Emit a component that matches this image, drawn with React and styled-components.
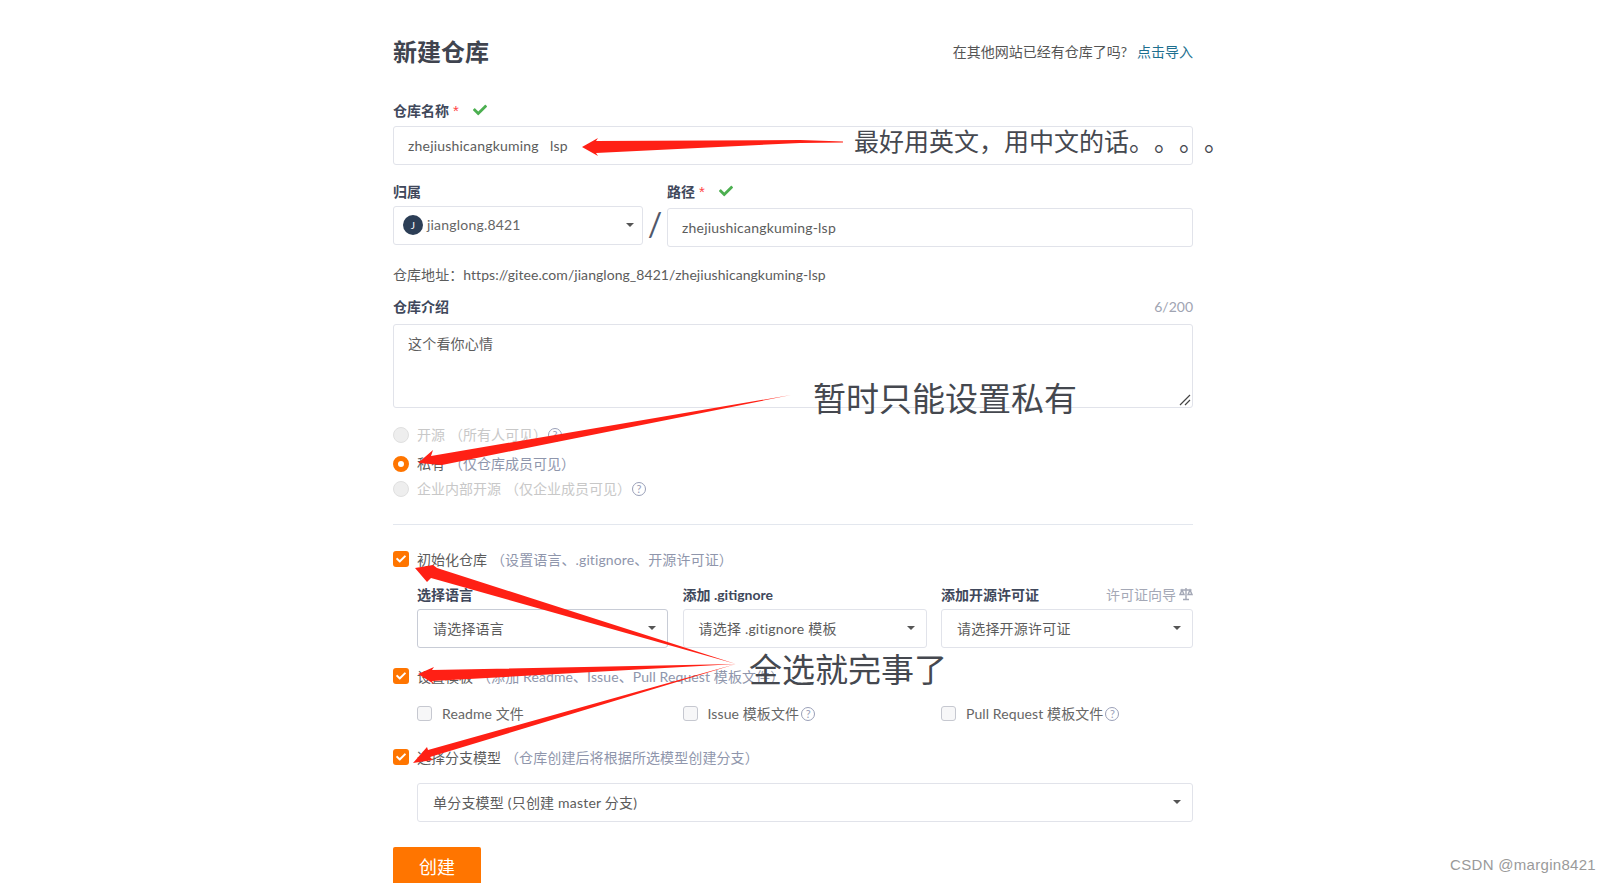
import React from "react";
import styled, { createGlobalStyle } from "styled-components";
import { FaCheck } from "react-icons/fa";

const Global = createGlobalStyle`
  html, body { margin: 0; padding: 0; background: #fff; height: 883px; overflow: hidden; }
  body { font-family: Lato, "Noto Sans CJK SC", sans-serif; font-size: 14px; color: #40485b; letter-spacing: 0.2px; text-spacing-trim: space-all; font-feature-settings: "chws" 0, "palt" 0; }
`;
const Page = styled.div`
  position: relative; width: 1611px; height: 883px; overflow: hidden; background: #fff;
`;
const Form = styled.div`
  width: 800px; margin-left: 393px; padding-top: 37px;
  display: flex; flex-direction: column;
`;
const Head = styled.div`
  display: flex; justify-content: space-between; align-items: center; height: 30px;
`;
const Title = styled.h1`
  margin: 0; font-size: 24px; font-weight: 700; color: #40444f; line-height: 30px; letter-spacing: 0;
`;
const ImportHint = styled.div`
  font-size: 14px; color: #555; padding-bottom: 2px; letter-spacing: 0;
`;
const ImportLink = styled.a` color: #1d6f8f; margin-left: 10px; text-decoration: none; `;
const Label = styled.div`
  display: flex; align-items: center; gap: 4px; height: 20px; letter-spacing: 0; flex: none;
  font-size: 14px; font-weight: 700; color: #40485b; margin-top: ${p => p.$top || 0}px;
`;
const Star = styled.span` color: #f44; font-family: "Liberation Sans", sans-serif; font-size: 15px; font-weight: 400; `;
const Ok = styled(FaCheck)` color: #4caf50; font-size: 14px; margin-left: 10px; `;
const Field = styled.div`
  height: 39px; box-sizing: border-box; border: 1px solid ${p => p.$focus ? "#c8ccd6" : "#e1e3ea"}; border-radius: 3px; flex: none;
  display: flex; align-items: center; justify-content: space-between;
  padding: 0 ${p => p.$pr || 14}px ${p => p.$pb || 0}px ${p => p.$pl || 14}px; margin-top: ${p => p.$top || 0}px;
  color: #5c5c5c; font-size: 14px; background: #fff; white-space: pre;
`;
const OwnerRow = styled.div`
  display: flex; margin-top: 16px;
`;
const Col = styled.div`
  display: flex; flex-direction: column; width: ${p => p.$w ? p.$w + "px" : "auto"}; flex: ${p => p.$flex || "none"};
`;
const Slash = styled.div`
  width: 24px; flex: none; padding-top: 25px;
  font-size: 32px; line-height: 36px; text-align: center; color: #50586a; font-weight: 400;
`;
const Avatar = styled.span`
  width: 20px; height: 20px; border-radius: 50%; background: #2c3e56; color: #fff;
  font-size: 10px; display: inline-flex; align-items: center; justify-content: center; margin-right: 4px;
`;
const OwnerValue = styled.span` display: flex; align-items: center; color: #666; `;
const Caret = styled.span`
  width: 0; height: 0; border: 4px solid transparent; border-top: 4.5px solid #555; border-bottom: 0; flex: none;
`;
const Address = styled.div`
  margin-top: 18px; height: 20px; line-height: 20px; color: #5c5c5c; letter-spacing: 0.05px;
`;
const Between = styled.div`
  display: flex; justify-content: space-between; align-items: center; height: 20px; margin-top: ${p => p.$top || 0}px;
`;
const Count = styled.span` color: #a0a4b2; font-size: 14px; font-weight: 400; letter-spacing: 0; `;
const TextArea = styled.div`
  position: relative; box-sizing: border-box; height: 84px; margin-top: 8px;
  border: 1px solid #e1e3ea; border-radius: 3px; padding: 9px 14px; color: #5c5c5c; line-height: 20px;
`;
const Grip = styled.svg` position: absolute; right: 1px; bottom: 1px; `;
const Radios = styled.div` margin-top: 17px; display: flex; flex-direction: column; `;
const RadioRow = styled.div`
  display: flex; align-items: center; height: ${p => p.$h}px; gap: 8px; color: ${p => p.$c}; font-size: 14px; letter-spacing: 0;
`;
const RadioText = styled.span` padding-bottom: 2px; `;
const Radio = styled.span`
  box-sizing: border-box; width: 16px; height: 16px; border-radius: 50%; flex: none;
  background: ${p => p.$on ? "#fff" : "#eee"};
  border: ${p => p.$on ? "5px solid #ff7500" : "1px solid #e0e0e0"};
`;
const Note2 = styled.span` margin-left: 4px; `;
const Owned = styled.span` color: #5c5c5c; `;
const Help = styled.span`
  box-sizing: border-box; display: inline-flex; width: 14px; height: 14px; border-radius: 50%;
  border: 1px solid #9aa0b8; color: #9aa0b8; font-size: 11px; align-items: center; justify-content: center; margin-left: ${p => p.$gap ?? 2}px;
  line-height: 1; vertical-align: 1px; letter-spacing: 0;
`;
const Rule = styled.div` height: 1px; background: #e3e7ee; margin-top: 29px; `;
const CheckRow = styled.div`
  display: flex; align-items: center; gap: 8px; height: 20px; margin-top: ${p => p.$top}px; color: #5c5c5c; letter-spacing: 0;
`;
const Check = styled.span`
  box-sizing: border-box; width: 16px; height: 16px; border-radius: 3px; background: #ff7500; flex: none;
  display: inline-flex; align-items: center; justify-content: center; color: #fff; font-size: 10px;
`;
const Muted = styled.span` color: #8f96ac; margin-left: -4px; letter-spacing: 0.1px; `;
const Indent = styled.div` margin-left: 24px; `;
const Three = styled.div`
  display: grid; grid-template-columns: 251px 244px 252px; column-gap: 14.5px; margin-top: ${p => p.$top || 0}px;
`;
const SubHead = styled.div`
  display: flex; justify-content: space-between; align-items: center; height: 20px; font-weight: 700; color: #40485b; letter-spacing: 0;
`;
const Guide = styled.span`
  display: inline-flex; align-items: center; gap: 3px; font-weight: 400; color: #a4a8b6;
`;
const Tick = styled.label`
  display: flex; align-items: center; gap: 10px; height: 20px; color: #666; letter-spacing: 0.1px;
`;
const Box = styled.span`
  box-sizing: border-box; width: 15px; height: 15px; border: 1px solid #c6c8d0; border-radius: 3px; background: #f7f7f8; flex: none;
`;
const Submit = styled.div`
  box-sizing: border-box; width: 88px; height: 40px; margin-top: 25px; padding-bottom: 2px; background: #ff7500; border-radius: 2px; color: #fff;
  font-size: 18px; display: flex; align-items: center; justify-content: center; flex: none; letter-spacing: 0;
`;
const Note = styled.div`
  position: absolute; left: ${p => p.$x}px; top: ${p => p.$y}px; font-size: ${p => p.$s}px; line-height: 1.2; letter-spacing: 0;
  color: #45484f; white-space: pre; font-family: "Noto Sans CJK SC", sans-serif;
`;
const Arrows = styled.svg` position: absolute; left: 0; top: 0; pointer-events: none; `;
const Mark = styled.div`
  position: absolute; right: 15px; top: 856px; font-size: 15px; color: #9a9a9a;
  font-family: "Liberation Sans", sans-serif; letter-spacing: 0.3px;
`;

export default function App() {
  return (
    <Page>
      <Global />
      <Form>
        <Head>
          <Title>新建仓库</Title>
          <ImportHint>在其他网站已经有仓库了吗?<ImportLink>点击导入</ImportLink></ImportHint>
        </Head>
        <Label $top={33}>仓库名称 <Star>*</Star><Ok /></Label>
        <Field $top={6}>{"zhejiushicangkuming   lsp"}</Field>
        <OwnerRow>
          <Col $w={250}>
            <Label>归属</Label>
            <Field $pl={9} $pr={8} $pb={2} $top={5}>
              <OwnerValue><Avatar>J</Avatar>jianglong.8421</OwnerValue>
              <Caret />
            </Field>
          </Col>
          <Slash>/</Slash>
          <Col $flex="1">
            <Label>路径 <Star>*</Star><Ok /></Label>
            <Field $top={7}>zhejiushicangkuming-lsp</Field>
          </Col>
        </OwnerRow>
        <Address>仓库地址：https://gitee.com/jianglong_8421/zhejiushicangkuming-lsp</Address>
        <Between $top={11}>
          <Label>仓库介绍</Label>
          <Count>6/200</Count>
        </Between>
        <TextArea>
          这个看你心情
          <Grip width="12" height="12" viewBox="0 0 12 12">
            <path d="M1 11 L11 1 M6 11 L11 6" stroke="#444" strokeWidth="1.2" fill="none" />
          </Grip>
        </TextArea>
        <Radios>
          <RadioRow $h={20} $c="#c8c8c8"><Radio /><RadioText>开源<Note2>（所有人可见）</Note2><Help $gap={1}>?</Help></RadioText></RadioRow>
          <RadioRow $h={38} $c="#8f96ac"><Radio $on /><RadioText><Owned>私有</Owned><Note2>（仅仓库成员可见）</Note2></RadioText></RadioRow>
          <RadioRow $h={12} $c="#c8c8c8"><Radio /><RadioText>企业内部开源<Note2>（仅企业成员可见）</Note2><Help $gap={1}>?</Help></RadioText></RadioRow>
        </Radios>
        <Rule />
        <CheckRow $top={24}><Check><FaCheck /></Check>初始化仓库<Muted>（设置语言、.gitignore、开源许可证）</Muted></CheckRow>
        <Indent>
          <Three $top={15}>
            <div>
              <SubHead>选择语言</SubHead>
              <Field $focus $pl={15} $pr={11} $pb={2} $top={5}>请选择语言<Caret /></Field>
            </div>
            <div>
              <SubHead>添加 .gitignore</SubHead>
              <Field $pl={15} $pr={11} $pb={2} $top={5}>请选择 .gitignore 模板<Caret /></Field>
            </div>
            <div>
              <SubHead>添加开源许可证<Guide>许可证向导
                <svg width="14" height="14" viewBox="0 0 14 14" fill="none" stroke="#a4a8b6" strokeWidth="1.4"><path d="M7 1v11M4 12.5h6M1.5 3h11M3 3L1 7.5h4zM11 3L9 7.5h4z" /></svg>
              </Guide></SubHead>
              <Field $pl={15} $pr={11} $pb={2} $top={5}>请选择开源许可证<Caret /></Field>
            </div>
          </Three>
        </Indent>
        <CheckRow $top={18}><Check><FaCheck /></Check>设置模板<Muted>（添加 Readme、Issue、Pull Request 模板文件）</Muted></CheckRow>
        <Indent>
          <Three $top={17}>
            <Tick><Box />Readme 文件</Tick>
            <Tick><Box /><span>Issue 模板文件<Help>?</Help></span></Tick>
            <Tick><Box /><span>Pull Request 模板文件<Help>?</Help></span></Tick>
          </Three>
        </Indent>
        <CheckRow $top={24}><Check><FaCheck /></Check>选择分支模型<Muted>（仓库创建后将根据所选模型创建分支）</Muted></CheckRow>
        <Indent>
          <Field $pl={15} $pr={11} $pb={2} $top={16}>单分支模型 (只创建 master 分支)<Caret /></Field>
        </Indent>
        <Submit>创建</Submit>
      </Form>
      <Arrows width="1611" height="883" viewBox="0 0 1611 883">
        <g fill="#ff2015">
          <polygon points="582,147 598,138 596,141 800,140 843,141.5 843,142.5 800,143 596,153 598,156" />
          <polygon points="791,395 442,465 418,463 433,450 431,456" />
          <polygon points="736,664 437,568 433,565 415,568 427,582 431,578" />
          <polygon points="736,664 432,670 434,667 418,674 434,684 432,681" />
          <polygon points="736,664 428,750 427,747 413,763 433,760 430,757" />
        </g>
      </Arrows>
      <Note $x={854} $y={125} $s={25}>最好用英文，用中文的话。。。。</Note>
      <Note $x={813} $y={378} $s={33}>暂时只能设置私有</Note>
      <Note $x={749} $y={649} $s={33}>全选就完事了</Note>
      <Mark>CSDN @margin8421</Mark>
    </Page>
  );
}
